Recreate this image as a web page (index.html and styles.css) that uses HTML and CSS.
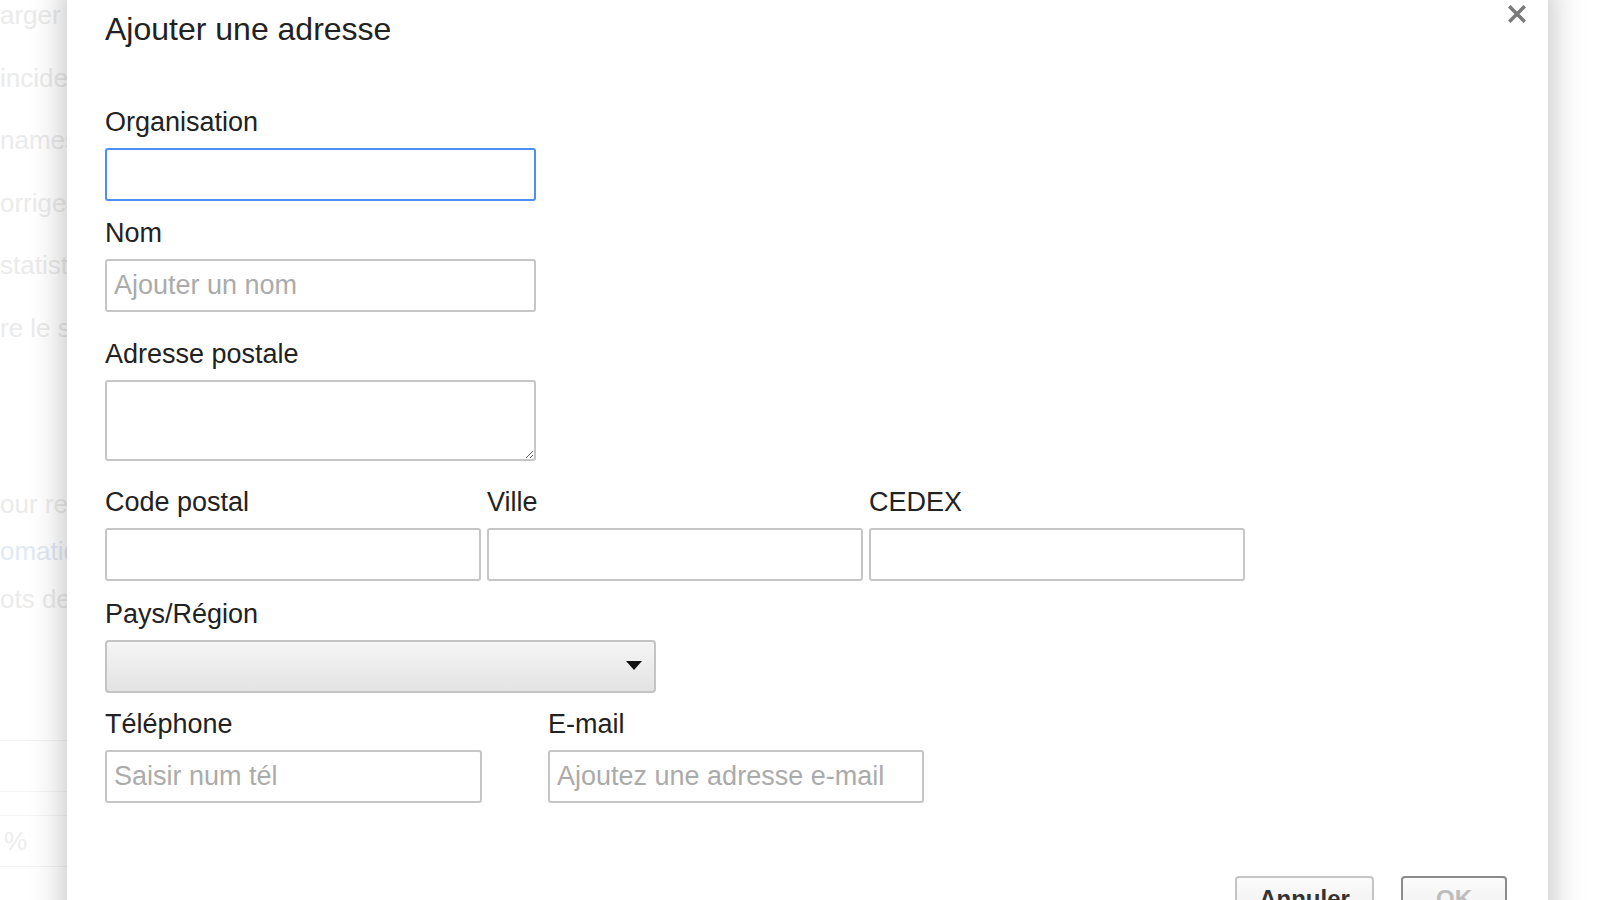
FILE: index.html
```html
<!DOCTYPE html>
<html lang="fr">
<head>
<meta charset="utf-8">
<title>Ajouter une adresse</title>
<link rel="stylesheet" href="styles.css">
</head>
<body>
<div class="page">
  <div class="bg-group">
    <p class="bg-line">arger les fichiers</p>
    <p class="bg-line">incidents</p>
    <p class="bg-line">namespaces</p>
    <p class="bg-line">orriger les erreurs</p>
    <p class="bg-line">statistiques</p>
    <p class="bg-line">re le suivi</p>
  </div>
  <div class="bg-group bg-group-2">
    <p class="bg-line bg-line-tight">our recevoir</p>
    <p class="bg-line bg-line-tight bg-link">omatique</p>
    <p class="bg-line bg-line-tight">ots de passe</p>
  </div>
  <div class="bg-table">
    <div class="bg-row"></div>
    <div class="bg-row bg-row-2">%</div>
  </div>
</div>

<div class="dialog" role="dialog" aria-labelledby="dlg-title">
  <button class="close" type="button" aria-label="Fermer">
    <svg width="18" height="18" viewBox="0 0 18 18"><path d="M2.5 2.5 L15.5 15.5 M15.5 2.5 L2.5 15.5" stroke="#7a7a7a" stroke-width="3.6" stroke-linecap="square" fill="none"/></svg>
  </button>
  <h1 class="title" id="dlg-title">Ajouter une adresse</h1>
  <form class="form">
    <div class="field">
      <label class="label" for="f-org">Organisation</label>
      <input class="input input-wide input-focus" id="f-org" type="text">
    </div>
    <div class="field field-lg">
      <label class="label" for="f-nom">Nom</label>
      <input class="input input-wide" id="f-nom" type="text" placeholder="Ajouter un nom">
    </div>
    <div class="field field-addr">
      <label class="label" for="f-addr">Adresse postale</label>
      <textarea class="input textarea input-wide" id="f-addr"></textarea>
    </div>
    <div class="field field-row3">
      <div class="col">
        <label class="label" for="f-cp">Code postal</label>
        <input class="input" id="f-cp" type="text">
      </div>
      <div class="col">
        <label class="label" for="f-ville">Ville</label>
        <input class="input" id="f-ville" type="text">
      </div>
      <div class="col">
        <label class="label" for="f-cedex">CEDEX</label>
        <input class="input" id="f-cedex" type="text">
      </div>
    </div>
    <div class="field field-pays">
      <label class="label" for="f-pays">Pays/Région</label>
      <div class="select-wrap">
        <select class="select" id="f-pays"><option></option></select>
        <svg class="select-arrow" width="16" height="9" viewBox="0 0 16 9"><path d="M0 0 H16 L8 9 Z" fill="#111"/></svg>
      </div>
    </div>
    <div class="field field-row2">
      <div class="col">
        <label class="label" for="f-tel">Téléphone</label>
        <input class="input" id="f-tel" type="text" placeholder="Saisir num tél">
      </div>
      <div class="col">
        <label class="label" for="f-mail">E-mail</label>
        <input class="input" id="f-mail" type="text" placeholder="Ajoutez une adresse e-mail">
      </div>
    </div>
  </form>
  <div class="actions">
    <button class="btn btn-cancel" type="button">Annuler</button>
    <button class="btn btn-ok" type="button" disabled>OK</button>
  </div>
</div>
</body>
</html>
```

FILE: styles.css
```css
html, body {
  margin: 0;
  padding: 0;
  width: 1600px;
  height: 900px;
  overflow: hidden;
  background: #ffffff;
  font-family: "Liberation Sans", Arial, Helvetica, sans-serif;
}

/* Underlying page, faded behind the dialog */
.page {
  width: 67px;
  overflow: hidden;
  color: #ebebeb;
  font-size: 26px;
  white-space: nowrap;
}
.bg-line {
  margin: 0 0 32.6px 0;
  line-height: 30px;
}
.bg-group-2 {
  margin-top: 146px;
}
.bg-line-tight {
  margin-bottom: 17.5px;
}
.bg-link {
  color: #e1e9f5;
}
.bg-table {
  margin-top: 126px;
}
.bg-row {
  height: 50px;
  border-top: 1px solid #f4f4f4;
  border-bottom: 1px solid #f4f4f4;
}
.bg-row-2 {
  margin-top: 23px;
  line-height: 50px;
  padding-left: 4px;
  color: #ededed;
}

/* Dialog */
.dialog {
  position: absolute;
  left: 67px;
  top: -20px;
  width: 1481px;
  height: 960px;
  box-sizing: border-box;
  padding: 30px 41px 0 38px;
  background: #ffffff;
  box-shadow: 0 0 34px rgba(0, 0, 0, 0.28);
  color: #222222;
}
.close {
  position: absolute;
  top: 25px;
  right: 22px;
  width: 18px;
  height: 18px;
  padding: 0;
  border: 0;
  background: none;
  display: flex;
}
.title {
  margin: 0 0 59px 0;
  font-size: 32px;
  line-height: 38px;
  font-weight: normal;
  color: #222222;
}

.form {
  display: flex;
  flex-direction: column;
}
.field {
  display: flex;
  flex-direction: column;
  margin-bottom: 17px;
}
.field-lg { margin-bottom: 27px; }
.field-addr { margin-bottom: 26px; }
.field-row3 {
  display: grid;
  grid-template-columns: 376px 376px 376px;
  column-gap: 6px;
  margin-bottom: 18px;
}
.field-pays { margin-bottom: 16px; }
.field-row2 {
  display: grid;
  grid-template-columns: 377px 376px;
  column-gap: 66px;
  margin-bottom: 0;
}
.col {
  display: flex;
  flex-direction: column;
}
.label {
  display: block;
  font-size: 27px;
  line-height: 30px;
  margin-bottom: 11px;
  color: #222222;
}

.input {
  display: block;
  box-sizing: border-box;
  width: 100%;
  height: 53px;
  margin: 0;
  padding: 0 7px;
  border: 2px solid #c6c6c6;
  border-radius: 3px;
  background: #ffffff;
  font-family: "Liberation Sans", Arial, Helvetica, sans-serif;
  font-size: 27px;
  color: #222222;
  outline: none;
}
.input::placeholder {
  color: #ababab;
}
.input-wide {
  width: 431px;
}
.input-focus {
  border-color: #4d8ff5;
}
.textarea {
  height: 81px;
  padding: 6px 7px;
  resize: both;
}

.select-wrap {
  position: relative;
  width: 551px;
}
.select {
  display: block;
  box-sizing: border-box;
  width: 551px;
  height: 53px;
  margin: 0;
  border: 2px solid #c4c4c4;
  border-radius: 4px;
  background: linear-gradient(#f5f5f5, #e3e3e3);
  appearance: none;
  -webkit-appearance: none;
  font-family: "Liberation Sans", Arial, Helvetica, sans-serif;
  font-size: 27px;
}
.select-arrow {
  position: absolute;
  right: 14px;
  top: 21px;
  pointer-events: none;
}

.actions {
  display: flex;
  justify-content: flex-end;
  gap: 27px;
  margin-top: 73px;
}
.btn {
  box-sizing: border-box;
  height: 56px;
  padding: 0;
  border: 2px solid #c4c4c4;
  border-radius: 4px;
  background: linear-gradient(#fbfbfb, #ececec);
  font-family: "Liberation Sans", Arial, Helvetica, sans-serif;
  font-size: 24px;
  font-weight: bold;
  line-height: 42px;
  display: flex;
  justify-content: center;
  align-items: flex-start;
}
.btn-cancel {
  width: 139px;
  color: #333333;
}
.btn-ok {
  width: 106px;
  color: #bdbdbd;
  border-color: #8c8c8c;
}
```
